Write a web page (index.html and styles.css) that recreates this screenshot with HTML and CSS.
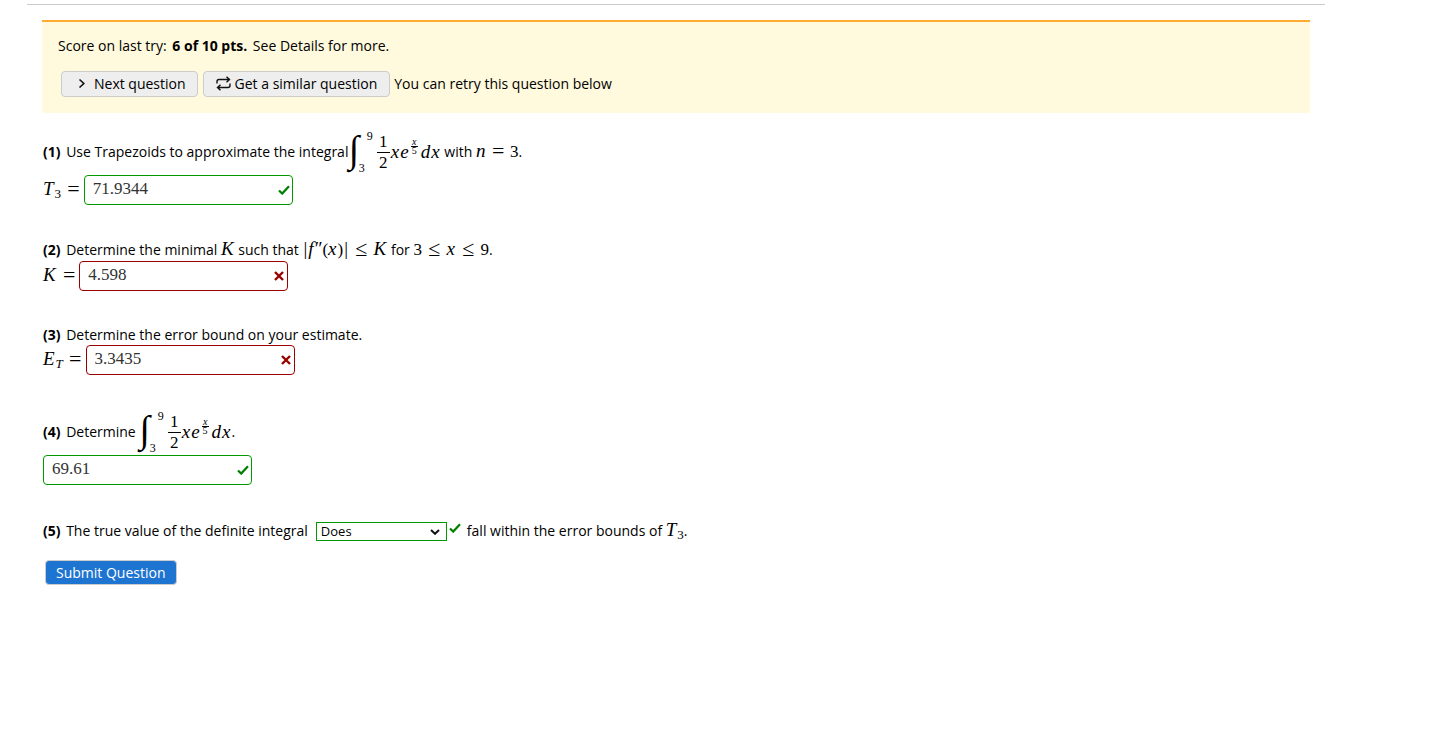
FILE: index.html
```html
<!DOCTYPE html>
<html lang="en">
<head>
    <meta charset="UTF-8">
    <meta name="viewport" content="width=device-width, initial-scale=1.0">
    <title>Question</title>
    <link rel="stylesheet" href="styles.css">
</head>
<body>
    <svg class="defs" width="0" height="0">
        <symbol id="check" viewBox="0 0 12 10">
            <path d="M1 5.5 L4.2 8.6 L11 1.2" fill="none" stroke="#008000" stroke-width="2.2"/>
        </symbol>
        <symbol id="cross" viewBox="0 0 12 10">
            <path d="M2 1 L10 9 M10 1 L2 9" fill="none" stroke="#990000" stroke-width="2.4"/>
        </symbol>
    </svg>

    <main class="assessment">
        <div class="feedback">
            <p>Score on last try: <b>6 of 10 pts.</b> See Details for more.</p>
            <div class="actions">
                <button type="button" class="btn next">
                    <svg width="8" height="12" viewBox="0 0 8 12"><path d="M1.5 1.5 L5.8 5.5 L1.5 9.5" fill="none" stroke="#111" stroke-width="1.6"/></svg>
                    Next question
                </button>
                <button type="button" class="btn similar">
                    <svg width="15" height="16" viewBox="0 0 15 16"><path d="M1 7.5 V5.5 Q1 3.5 3 3.5 H13.5 M10.5 0.8 L13.5 3.5 L10.5 6.2 M14 7.5 V9.5 Q14 11.5 12 11.5 H1.5 M4.5 8.8 L1.5 11.5 L4.5 14.2" fill="none" stroke="#111" stroke-width="1.4"/></svg>
                    Get a similar question
                </button>
                <span>You can retry this question below</span>
            </div>
        </div>

        <form class="question">
            <section class="part">
                <div class="row tall">
                    <span><b>(1)</b> Use Trapezoids to approximate the integral</span>
                    <span class="math">
                        <span class="int">∫</span>
                        <span class="limits"><span>9</span><span>3</span></span>
                        <span class="frac"><span>1</span><span>2</span></span>
                        <i>x</i><i>e</i>
                        <span class="frac small"><i>x</i><span>5</span></span>
                        <i>d</i><i>x</i>
                    </span>
                    <span>&nbsp;with <i class="m">n</i> <span class="m rel">=</span> <span class="m">3</span>.</span>
                </div>
                <div class="answer">
                    <label for="a1"><i>T</i><sub>3</sub> <span class="rel">=</span></label>
                    <span class="field correct">
                        <input type="text" id="a1" value="71.9344">
                        <svg class="mark"><use href="#check"/></svg>
                    </span>
                </div>
            </section>

            <section class="part">
                <div class="row medium">
                    <span><b>(2)</b> Determine the minimal <i class="m">K</i> such that <span class="m"><span class="abs">|</span><i>f″</i>(<i>x</i>)<span class="abs">|</span> <span class="rel">≤</span> <i>K</i></span> for <span class="m">3 <span class="rel">≤</span> <i>x</i> <span class="rel">≤</span> 9</span>.</span>
                </div>
                <div class="answer">
                    <label for="a2"><i>K</i> <span class="rel">=</span></label>
                    <span class="field wrong">
                        <input type="text" id="a2" value="4.598">
                        <svg class="mark"><use href="#cross"/></svg>
                    </span>
                </div>
            </section>

            <section class="part">
                <div class="row">
                    <span><b>(3)</b> Determine the error bound on your estimate.</span>
                </div>
                <div class="answer">
                    <label for="a3"><i>E</i><sub class="cap">T</sub> <span class="rel">=</span></label>
                    <span class="field wrong">
                        <input type="text" id="a3" value="3.3435">
                        <svg class="mark"><use href="#cross"/></svg>
                    </span>
                </div>
            </section>

            <section class="part">
                <div class="row tall">
                    <span><b>(4)</b> Determine&nbsp;</span>
                    <span class="math">
                        <span class="int">∫</span>
                        <span class="limits"><span>9</span><span>3</span></span>
                        <span class="frac"><span>1</span><span>2</span></span>
                        <i>x</i><i>e</i>
                        <span class="frac small"><i>x</i><span>5</span></span>
                        <i>d</i><i>x</i>
                    </span>
                    <span>.</span>
                </div>
                <div class="answer">
                    <span class="field correct">
                        <input type="text" id="a4" value="69.61" aria-label="Value of the integral">
                        <svg class="mark"><use href="#check"/></svg>
                    </span>
                </div>
            </section>

            <section class="part">
                <div class="row choice">
                    <label for="a5"><b>(5)</b> The true value of the definite integral</label>
                    <span class="select">
                        <select id="a5">
                            <option>Does</option>
                            <option>Does not</option>
                        </select>
                        <svg class="arrow" viewBox="0 0 10 6"><path d="M1 1 L5 4.8 L9 1" fill="none" stroke="#111" stroke-width="2"/></svg>
                    </span>
                    <svg class="tick"><use href="#check"/></svg>
                    <span>fall within the error bounds of <span class="m"><i>T</i><sub>3</sub></span>.</span>
                </div>
            </section>

            <button type="submit" class="submit">Submit Question</button>
        </form>
    </main>
</body>
</html>
```

FILE: styles.css
```css
* {
    box-sizing: border-box;
}
body {
    margin: 4px 107px 0 27px;
    font-family: "Trebuchet MS", "Open Sans", sans-serif;
    font-size: 14px;
    line-height: 20px;
    color: #000;
    background: #fff;
}
.defs {
    position: absolute;
}
.assessment {
    border-top: 1px solid #ccc;
    padding: 15px 15px 0;
}
.feedback {
    height: 93px;
    padding: 14px 16px;
    background: #fff9dd;
    border-top: 2px solid #ffaa33;
}
.feedback p {
    margin: 0 0 15px;
}
b {
    margin-right: 2px;
}
.feedback b {
    margin-left: 2px;
}
.actions {
    display: flex;
    align-items: center;
    gap: 4px;
    padding-left: 3px;
}
button, select {
    font: inherit;
}
.btn {
    display: flex;
    align-items: center;
    height: 26px;
    padding: 0 12px;
    color: #000;
    background: #eee;
    border: 1px solid #ccc;
    border-radius: 4px;
}
.next {
    padding: 0 11px 0 16px;
    gap: 8px;
    margin-right: 1px;
}
.similar {
    gap: 4px;
}
.question {
    padding: 16px 1px 0;
}
.part {
    margin-bottom: 34px;
}
.row {
    display: flex;
    align-items: center;
    height: 20px;
    white-space: nowrap;
}
.row.medium {
    height: 22px;
}
.row.tall {
    height: 46px;
}
.row.choice {
    height: 24px;
}

/* math */
.m, .math, .answer label {
    font-family: "Liberation Serif", serif;
    font-size: 17px;
    line-height: 16px;
}
.math {
    display: flex;
    align-items: center;
}
i.m, .m i, .math > i, .answer label i {
    font-size: 19px;
    margin-right: 1px;
}
.rel {
    margin: 0 2px;
    font-family: "Liberation Serif", serif;
    font-size: 22px;
    line-height: 0;
    vertical-align: -1px;
}
.abs {
    margin: 0 1px;
    font-size: 19px;
}
.int {
    height: 44px;
    font-size: 38px;
    line-height: 38px;
    font-style: italic;
}
.limits {
    display: flex;
    flex-direction: column;
    justify-content: space-between;
    height: 44px;
    width: 14px;
    margin-right: 4px;
    font-size: 12px;
    line-height: 12px;
}
.limits span:first-child {
    text-align: right;
}
.frac {
    display: flex;
    flex-direction: column;
    width: 13px;
    margin-right: 1px;
    text-align: center;
    line-height: 20px;
}
.frac :first-child {
    border-bottom: 1px solid #000;
}
.frac.small {
    width: 7px;
    margin: 0 3px 12px 1px;
    font-size: 10px;
    line-height: 8px;
}
sub {
    font-size: 13px;
    line-height: 0;
    vertical-align: -3px;
}
.cap {
    font-style: italic;
}

/* answer boxes */
.answer {
    display: flex;
    align-items: center;
}
.answer label {
    padding: 0 2px 2px 0;
}
.field {
    position: relative;
}
.field input {
    display: block;
    width: 209px;
    height: 30px;
    padding: 0 20px 3px 8px;
    font-family: "Liberation Serif", serif;
    font-size: 17px;
    color: #333;
    background: #fff;
    border: 1px solid #009900;
    border-radius: 4px;
}
.wrong input {
    border-color: #990000;
}
.mark {
    position: absolute;
    right: 3px;
    top: 10px;
    width: 12px;
    height: 10px;
}
.select {
    position: relative;
    margin-left: 8px;
}
select {
    display: block;
    appearance: none;
    width: 131px;
    height: 19px;
    padding: 0 4px;
    font-size: 13px;
    line-height: 17px;
    color: #000;
    background: #fff;
    border: 1px solid #009900;
    border-radius: 0;
}
.arrow {
    position: absolute;
    right: 7px;
    top: 7px;
    width: 10px;
    height: 6px;
}
.tick {
    width: 12px;
    height: 10px;
    margin: 0 6px 6px 2px;
}
.submit {
    display: block;
    height: 25px;
    margin: -17px 0 0 2px;
    padding: 0 10px;
    color: #fff;
    background: #1e74d1;
    border: 1px solid #ccc;
    border-radius: 4px;
}
```
